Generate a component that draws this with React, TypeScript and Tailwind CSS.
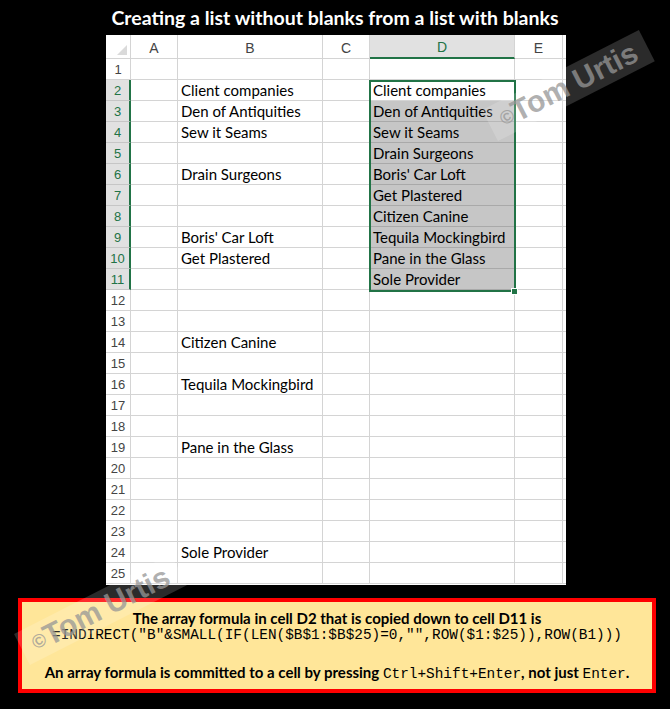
import React from "react";

const COLS = ["A", "B", "C", "D", "E"];
const colW = ["w-[47px]", "w-[145px]", "w-[47px]", "w-[145px]", "w-[48px]"];

const listB: Record<number, string> = {
  2: "Client companies",
  3: "Den of Antiquities",
  4: "Sew it Seams",
  6: "Drain Surgeons",
  9: "Boris' Car Loft",
  10: "Get Plastered",
  14: "Citizen Canine",
  16: "Tequila Mockingbird",
  19: "Pane in the Glass",
  24: "Sole Provider",
};

const listD = [
  "Client companies",
  "Den of Antiquities",
  "Sew it Seams",
  "Drain Surgeons",
  "Boris' Car Loft",
  "Get Plastered",
  "Citizen Canine",
  "Tequila Mockingbird",
  "Pane in the Glass",
  "Sole Provider",
];

const cellFont = "font-['Lato','Liberation_Sans',sans-serif] text-[15px] text-black";

function Watermark({ className }: { className: string }) {
  return (
    <div className={`pointer-events-none absolute origin-left -rotate-[27deg] ${className}`}>
      <div className="bg-white/[0.17] px-3 font-['Liberation_Sans',sans-serif] text-[30px] leading-[34px] font-bold whitespace-nowrap text-[rgba(150,150,150,0.75)]">
        <span className="text-[19px] align-[3px]">©</span>Tom Urtis
      </div>
    </div>
  );
}

function Row({ n }: { n: number }) {
  const inSel = n >= 2 && n <= 11;
  return (
    <div className="flex h-[21px]">
      <div
        className={`flex w-[25px] items-center justify-center pt-[1px] font-['Liberation_Sans',sans-serif] text-[13px] ${
          inSel
            ? "border-r-2 border-b border-r-[#217346] border-b-[#c6c6c6] bg-[#e1e1e1] text-[#217346]"
            : "border-r border-b border-[#d4d4d4] text-[#444]"
        }`}
      >
        {n}
      </div>
      {COLS.map((c, i) => {
        const isD = c === "D";
        const gray = isD && n >= 3 && n <= 11;
        let text = "";
        if (c === "B") text = listB[n] ?? "";
        if (isD && inSel) text = listD[n - 2];
        return (
          <div
            key={c}
            className={`${colW[i]} flex items-center border-r border-b pt-[1px] pl-[3px] whitespace-nowrap ${cellFont} ${
              gray ? "border-[#a9a9a9] bg-[#c6c6c6]" : "border-[#d4d4d4] bg-white"
            }`}
          >
            {text}
          </div>
        );
      })}
      <div className="w-[3px] border-b border-[#d4d4d4]" />
    </div>
  );
}

export default function App() {
  const rows = Array.from({ length: 25 }, (_, i) => i + 1);
  return (
    <div className="relative h-[709px] w-[670px] overflow-hidden bg-black">
      <div className="flex h-[35px] items-center justify-center font-['Lato','Liberation_Sans',sans-serif] text-[19.5px] font-bold text-white">
        Creating a list without blanks from a list with blanks
      </div>

      <div className="relative ml-[106px] h-[550px] w-[460px] overflow-hidden bg-white">
        {/* column headers */}
        <div className="flex h-[24px] border-b border-[#d4d4d4]">
          <div className="relative w-[25px] border-r border-[#d4d4d4]">
            <div className="absolute right-[3px] bottom-[3px] h-0 w-0 border-t-[10px] border-l-[10px] border-t-transparent border-l-transparent border-b-0 border-r-[10px] border-r-[#dadada]" />
          </div>
          {COLS.map((c, i) => (
            <div
              key={c}
              className={`${colW[i]} flex items-center justify-center pt-[3px] font-['Liberation_Sans',sans-serif] text-[14px] ${
                c === "D"
                  ? "-mb-[1px] border-r border-b-2 border-r-[#d4d4d4] border-b-[#217346] bg-[#e1e1e1] text-[#217346]"
                  : "border-r border-[#d4d4d4] text-[#444]"
              }`}
            >
              {c}
            </div>
          ))}
        </div>
        {rows.map((n) => (
          <Row key={n} n={n} />
        ))}

        {/* selection D2:D11 */}
        <div className="absolute top-[45px] left-[263px] h-[212px] w-[147px] border-2 border-[#217346]" />
        <div className="absolute top-[253px] left-[405px] h-[7px] w-[7px] border border-white bg-[#217346]" />
      </div>

      <div className="mt-[13px] ml-[18px] flex h-[95px] w-[638px] flex-col items-center border-4 border-[#ff0000] bg-[#ffe699] pt-[8px] text-black">
        <div className="font-['Lato','Liberation_Sans',sans-serif] text-[15px] leading-[17px] font-bold">
          The array formula in cell D2 that is copied down to cell D11 is
        </div>
        <div className="font-['Liberation_Mono',monospace] text-[14.4px] leading-[16px]">
          =INDIRECT("B"&amp;SMALL(IF(LEN($B$1:$B$25)=0,"",ROW($1:$25)),ROW(B1)))
        </div>
        <div className="mt-[21px] font-['Lato','Liberation_Sans',sans-serif] text-[15px] leading-[17px] font-bold">
          An array formula is committed to a cell by pressing{" "}
          <span className="font-['Liberation_Mono',monospace] text-[14.4px] font-normal">Ctrl+Shift+Enter</span>, not just{" "}
          <span className="font-['Liberation_Mono',monospace] text-[14.4px] font-normal">Enter</span>.
        </div>
      </div>

      <Watermark className="top-[108px] left-[490px]" />
      <Watermark className="top-[632px] left-[22px]" />
    </div>
  );
}
